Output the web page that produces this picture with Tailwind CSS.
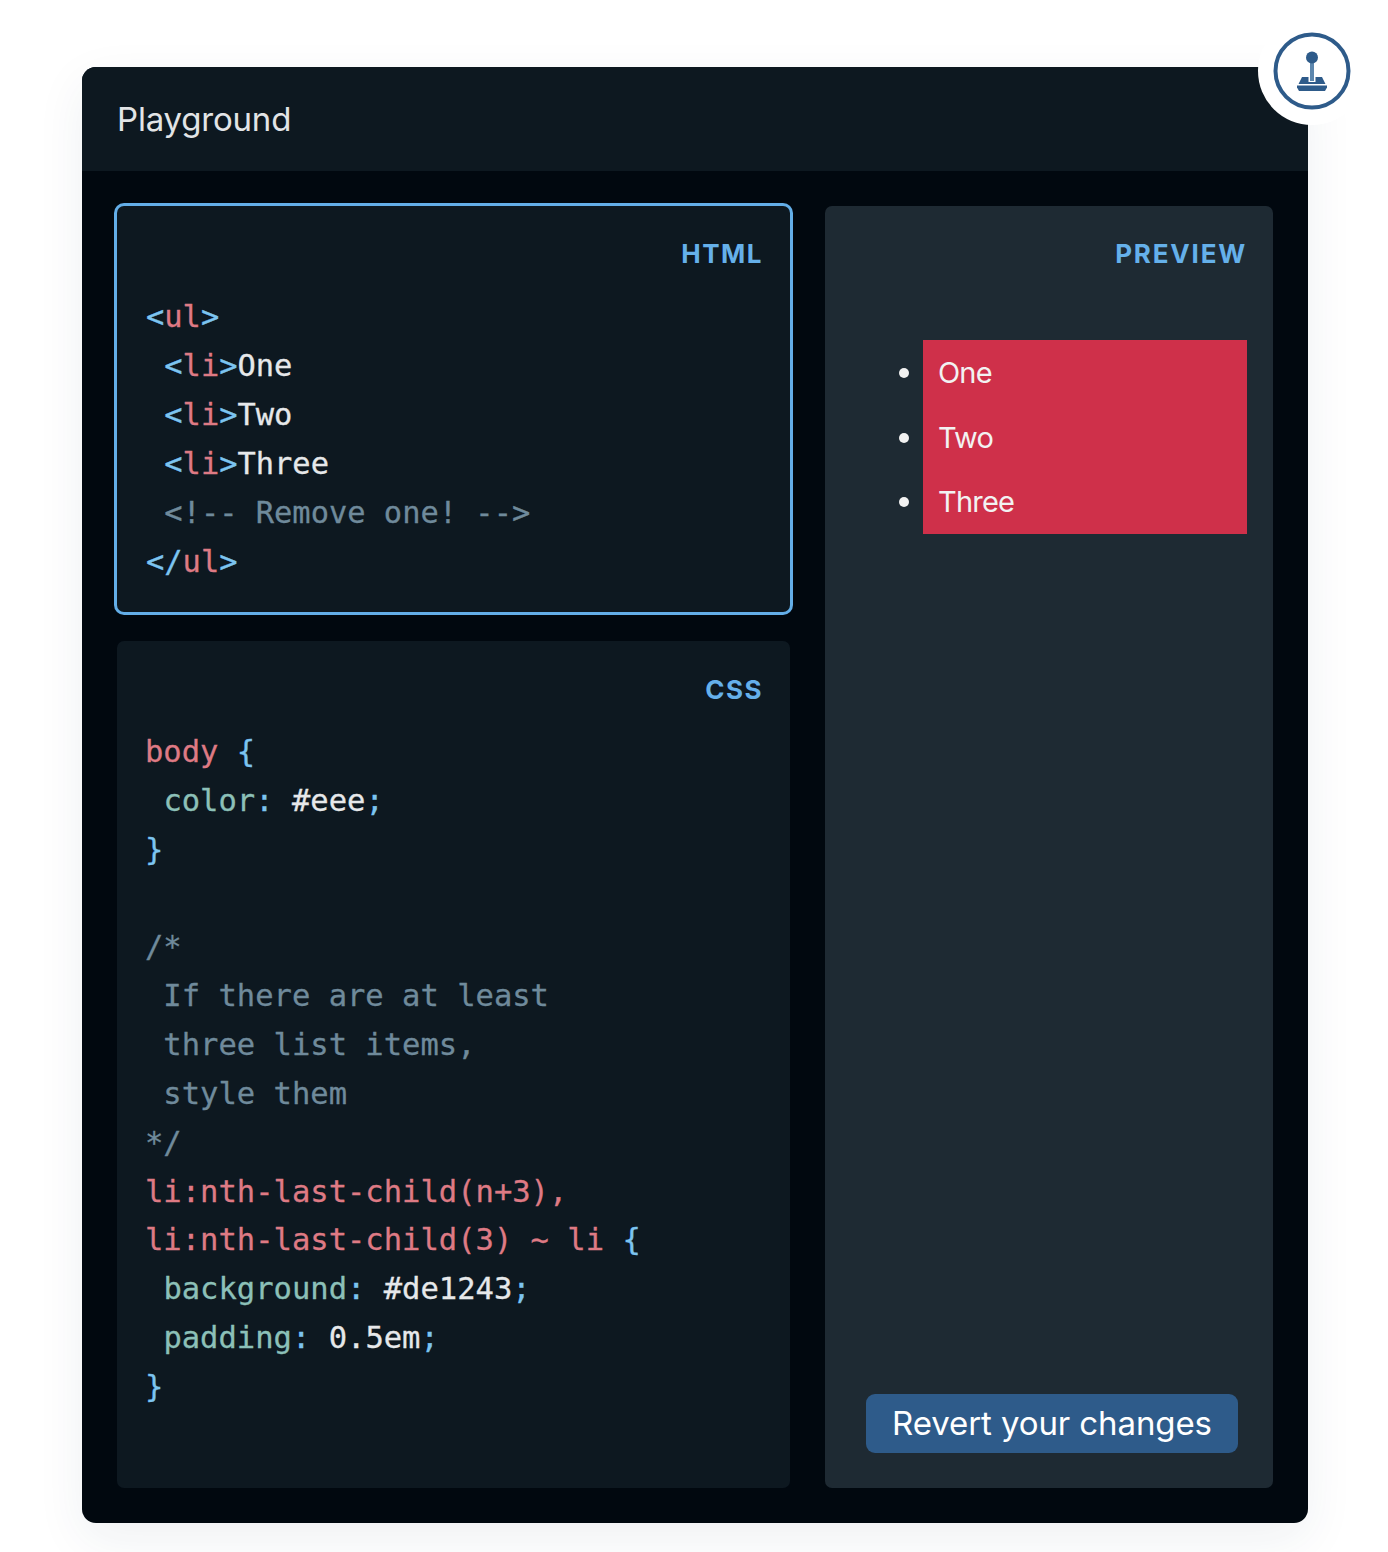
<!DOCTYPE html>
<html lang="en">
<head>
  <meta charset="UTF-8">
  <meta name="viewport" content="width=device-width, initial-scale=1.0">
  <title>Playground</title>
  <script src="https://cdn.jsdelivr.net/npm/@tailwindcss/browser@4"></script>
</head>
<body class="bg-white font-['Inter',sans-serif]">
  <div class="pt-[67px] pl-[82px] w-[1388px] h-[1552px] overflow-hidden">
    <div class="relative w-[1226px] h-[1456px] rounded-[14px] bg-[#01080f] shadow-[0_16px_50px_rgba(30,50,90,0.07)] flex flex-col">

      <!-- Header -->
      <div class="h-[104px] shrink-0 rounded-t-[14px] bg-[#0d1820] pl-[35px] pt-[2px] flex items-center text-[33px] text-[#e2e4e6] tracking-[-0.2px]">Playground</div>

      <!-- Badge -->
      <div class="absolute -top-[50px] left-[1176px] w-[108px] h-[108px] rounded-full bg-white flex items-center justify-center">
        <svg width="78" height="78" viewBox="0 0 78 78" fill="none">
          <circle cx="39" cy="39" r="36.500" stroke="#2e5b8a" stroke-width="4"/>
          <rect x="37" y="29" width="4" height="20" fill="#5d87ae"/>
          <circle cx="39" cy="25.500" r="6" fill="#2e5b8a"/>
          <path d="M29 45h6.500v5h7v-5H49l3.500 7h-27z" fill="#2e5b8a"/>
          <path d="M24 53.500h30v2l-2 3.500H26l-2-3.500z" fill="#2e5b8a"/>
        </svg>
      </div>

      <!-- Panels -->
      <div class="flex-1 flex gap-[35px] pt-[35px] px-[35px] pb-[35px]">
        <div class="w-[673px] flex flex-col gap-[29px]">

          <!-- HTML editor -->
          <div class="h-[406px] rounded-[7px] bg-[#0d1820] ring-[3px] ring-[#63aee8] pt-[33px] pr-[27px] pl-[29px]">
            <div class="text-right text-[26px] leading-[30px] font-bold tracking-[1.5px] text-[#65b0ea]">HTML</div>
            <pre class="mt-[24px] font-['DejaVu_Sans_Mono',monospace] text-[30.4px] leading-[48.9px] text-[#e6e8ea] [-webkit-text-stroke:0.3px]"><span class="text-[#7cc4f0]">&lt;</span><span class="text-[#de7a84]">ul</span><span class="text-[#7cc4f0]">&gt;</span>
 <span class="text-[#7cc4f0]">&lt;</span><span class="text-[#de7a84]">li</span><span class="text-[#7cc4f0]">&gt;</span>One
 <span class="text-[#7cc4f0]">&lt;</span><span class="text-[#de7a84]">li</span><span class="text-[#7cc4f0]">&gt;</span>Two
 <span class="text-[#7cc4f0]">&lt;</span><span class="text-[#de7a84]">li</span><span class="text-[#7cc4f0]">&gt;</span>Three
 <span class="text-[#6f8a9b]">&lt;!-- Remove one! --&gt;</span>
<span class="text-[#7cc4f0]">&lt;/</span><span class="text-[#de7a84]">ul</span><span class="text-[#7cc4f0]">&gt;</span></pre>
          </div>

          <!-- CSS editor -->
          <div class="flex-1 rounded-[7px] bg-[#0d1820] pt-[34px] pr-[27px] pl-[28px]">
            <div class="text-right text-[26px] leading-[30px] font-bold tracking-[1.5px] text-[#65b0ea]">CSS</div>
            <pre class="mt-[23px] font-['DejaVu_Sans_Mono',monospace] text-[30.5px] leading-[48.85px] text-[#e6e8ea] [-webkit-text-stroke:0.3px]"><span class="text-[#de7a84]">body</span> <span class="text-[#7cc4f0]">{</span>
 <span class="text-[#8cc0b8]">color</span><span class="text-[#7cc4f0]">:</span> #eee<span class="text-[#7cc4f0]">;</span>
<span class="text-[#7cc4f0]">}</span>

<span class="text-[#6f8a9b]">/*
 If there are at least
 three list items,
 style them
*/</span>
<span class="text-[#de7a84]">li:nth-last-child(n+3),
li:nth-last-child(3) ~ li</span> <span class="text-[#7cc4f0]">{</span>
 <span class="text-[#8cc0b8]">background</span><span class="text-[#7cc4f0]">:</span> #de1243<span class="text-[#7cc4f0]">;</span>
 <span class="text-[#8cc0b8]">padding</span><span class="text-[#7cc4f0]">:</span> 0.5em<span class="text-[#7cc4f0]">;</span>
<span class="text-[#7cc4f0]">}</span></pre>
          </div>
        </div>

        <!-- Preview -->
        <div class="w-[448px] rounded-[7px] bg-[#1e2a33] pt-[33px] pr-[26px] flex flex-col">
          <div class="text-right text-[26px] leading-[30px] font-bold tracking-[1.8px] text-[#65b0ea]">PREVIEW</div>
          <ul class="mt-[71px] ml-[98px] list-none text-[29px] leading-[34.67px] tracking-[-0.8px] text-[#f2f2f2]">
            <li class="relative bg-[#cf304a] px-[15px] pt-[16px] pb-[14px] before:absolute before:left-[-24px] before:top-[28px] before:w-[10px] before:h-[10px] before:rounded-full before:bg-[#f2f2f2] before:content-['']">One</li>
            <li class="relative bg-[#cf304a] px-[15px] pt-[16px] pb-[14px] before:absolute before:left-[-24px] before:top-[28px] before:w-[10px] before:h-[10px] before:rounded-full before:bg-[#f2f2f2] before:content-['']">Two</li>
            <li class="relative bg-[#cf304a] px-[15px] pt-[16px] pb-[14px] before:absolute before:left-[-24px] before:top-[28px] before:w-[10px] before:h-[10px] before:rounded-full before:bg-[#f2f2f2] before:content-['']">Three</li>
          </ul>
          <div class="mt-auto mb-[35px] ml-[41px] w-[372px] h-[59px] rounded-[9px] bg-[#2e5b8a] flex items-center justify-center text-[33px] tracking-[-0.1px] text-white">Revert your changes</div>
        </div>
      </div>
    </div>
  </div>
</body>
</html>
